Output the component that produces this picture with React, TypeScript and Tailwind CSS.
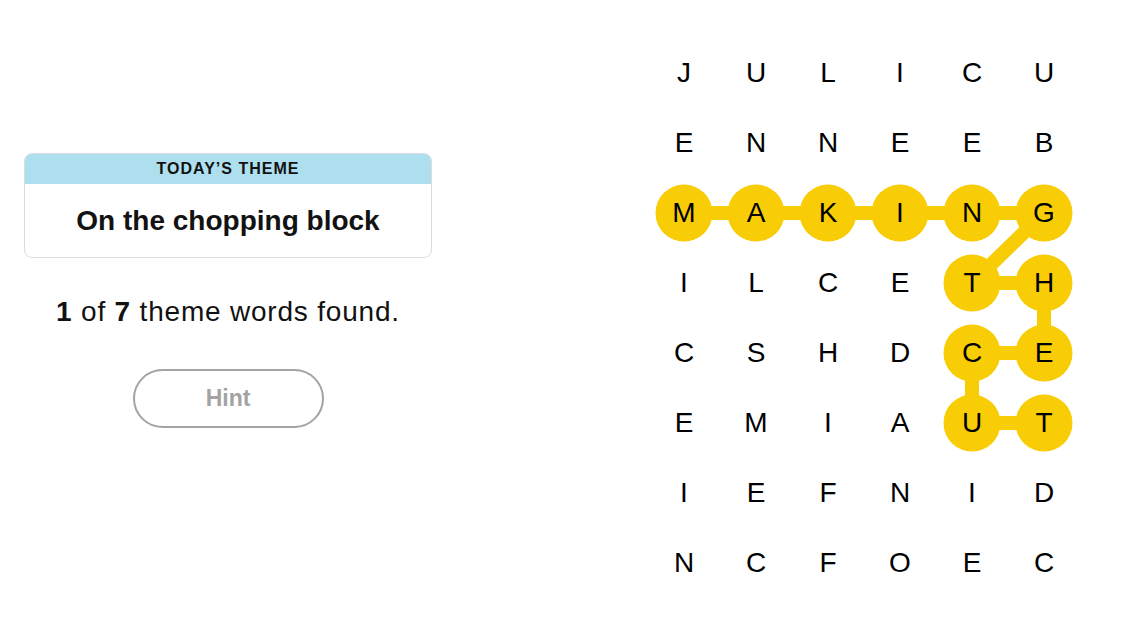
import React from "react";

// ── Board data ──────────────────────────────────────────────────────────────

const ROWS = [
  "JULICU",
  "ENNEEB",
  "MAKING",
  "ILCETH",
  "CSHDCE",
  "EMIAUT",
  "IEFNID",
  "NCFOEC",
];

const CELL_W = 72;
const CELL_H = 70;

// spangram path: MAKING THE CUT
const PATH: [number, number][] = [
  [2, 0],
  [2, 1],
  [2, 2],
  [2, 3],
  [2, 4],
  [2, 5],
  [3, 4],
  [3, 5],
  [4, 5],
  [4, 4],
  [5, 4],
  [5, 5],
];

const YELLOW = "#f8cd05";

const center = ([r, c]: [number, number]) => ({
  x: c * CELL_W + CELL_W / 2,
  y: r * CELL_H + CELL_H / 2,
});

function Board() {
  return (
    <div className="relative h-[560px] w-[432px]">
      {/* path highlight */}
      <svg
        className="absolute inset-0"
        width={432}
        height={560}
        viewBox="0 0 432 560"
      >
        {PATH.slice(1).map((cell, i) => {
          const a = center(PATH[i]);
          const b = center(cell);
          return (
            <line
              key={i}
              x1={a.x}
              y1={a.y}
              x2={b.x}
              y2={b.y}
              stroke={YELLOW}
              strokeWidth={14}
            />
          );
        })}
        {PATH.map((cell, i) => {
          const p = center(cell);
          return <circle key={i} cx={p.x} cy={p.y} r={28.5} fill={YELLOW} />;
        })}
      </svg>

      {/* letters */}
      <div className="relative grid grid-cols-6 grid-rows-8">
        {ROWS.map((row, r) =>
          row.split("").map((ch, c) => (
            <div
              key={`${r}-${c}`}
              className="flex h-[70px] w-[72px] items-center justify-center text-[28px] leading-none text-black"
            >
              {ch}
            </div>
          ))
        )}
      </div>
    </div>
  );
}

export default function App() {
  return (
    <div
      className="flex h-[631px] w-[1122px] bg-white pl-[24px] text-black"
      style={{ fontFamily: '"Liberation Sans", Arial, sans-serif' }}
    >
      {/* Left panel */}
      <div className="flex w-[408px] flex-col items-center pt-[153px]">
        <div className="w-full overflow-hidden rounded-[8px] border border-[#dcdcdc]">
          <div className="flex h-[30px] items-center justify-center bg-[#aedfee] text-[16px] font-bold tracking-[1px] text-[#121212]">
            TODAY’S THEME
          </div>
          <div className="flex h-[73px] items-center justify-center text-[28px] font-bold text-[#121212]">
            On the chopping block
          </div>
        </div>

        <p className="mt-[38px] text-[28px] leading-[32px] tracking-[0.8px] text-[#121212]">
          <span className="font-bold">1</span> of{" "}
          <span className="font-bold">7</span> theme words found.
        </p>

        <button className="mt-[41px] flex h-[59px] w-[191px] items-center justify-center rounded-full border-2 border-[#a3a3a3] text-[23px] font-bold text-[#a3a3a3]">
          Hint
        </button>
      </div>

      {/* Board */}
      <div className="ml-[216px] pt-[38px]">
        <Board />
      </div>
    </div>
  );
}
